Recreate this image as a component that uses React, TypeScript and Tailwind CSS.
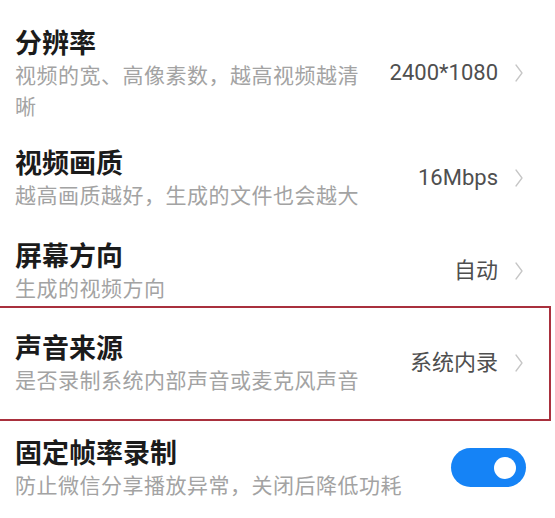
import React from 'react'

const cjk = {fontFamily: '"Noto Sans CJK SC", "Noto Sans", sans-serif'}
const latin = {fontFamily: 'Roboto, "Noto Sans CJK SC", sans-serif'}

function Chevron() {
  return (
    <svg className="ml-[17px] h-[18px] w-[8px] shrink-0" viewBox="0 0 8 18" fill="none">
      <polyline points="1,1 7,9 1,17" stroke="#c6c6c6" strokeWidth="1.3" strokeLinecap="round" strokeLinejoin="round" />
    </svg>
  )
}

type RowProps = {
  title: string
  desc: string
  value?: string
  toggle?: boolean
  className?: string
}

function Row({title, desc, value, toggle, className}: RowProps) {
  return (
    <div className={`flex items-center pl-[15px] ${className ?? ''}`}>
      <div className="min-w-0 flex-1" style={cjk}>
        <div className="text-[27px] font-semibold leading-[34px] text-[#1b1b1b]">{title}</div>
        <div className="text-[21px] leading-[31px] tracking-[0.5px] text-[#a3a3a3]">{desc}</div>
      </div>
      {toggle ? (
        <div className="ml-6 flex h-[39px] w-[75px] shrink-0 items-center justify-end rounded-full bg-[#1583f6] pr-[10px]">
          <div className="h-[22px] w-[22px] rounded-full bg-white"></div>
        </div>
      ) : (
        <div className="ml-6 flex shrink-0 items-center">
          <span className="text-[22px] leading-none text-[#4f4f4f]" style={latin}>{value}</span>
          <Chevron />
        </div>
      )}
    </div>
  )
}

export default function App() {
  return (
    <div className="h-[518px] w-[555px] overflow-hidden bg-white pt-[25px]">
      <Row
        className="pr-[32px]"
        title="分辨率"
        desc="视频的宽、高像素数，越高视频越清晰"
        value="2400*1080"
      />
      <Row
        className="mt-[24px] pr-[32px]"
        title="视频画质"
        desc="越高画质越好，生成的文件也会越大"
        value="16Mbps"
      />
      <Row
        className="mt-[28px] pr-[32px]"
        title="屏幕方向"
        desc="生成的视频方向"
        value="自动"
      />
      <div className="mr-[4px] mt-[3px] border-y-2 border-r-2 border-[#a9303d] pb-[24px] pt-[22px]">
        <Row
          className="pr-[26px]"
          title="声音来源"
          desc="是否录制系统内部声音或麦克风声音"
          value="系统内录"
        />
      </div>
      <Row
        className="mt-[14px] pr-[29px]"
        title="固定帧率录制"
        desc="防止微信分享播放异常，关闭后降低功耗"
        toggle
      />
    </div>
  )
}
